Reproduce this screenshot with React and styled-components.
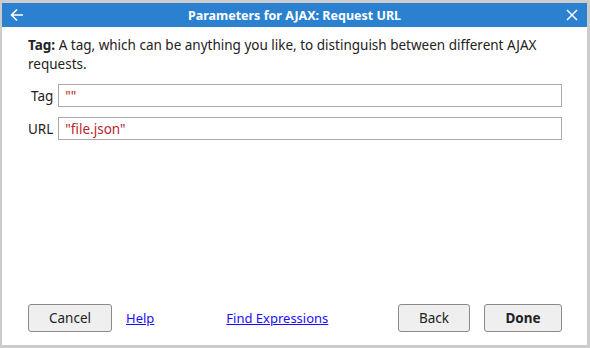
import React from 'react'
import styled, { createGlobalStyle } from 'styled-components'

const Global = createGlobalStyle`
html, body {
    margin:0;
    padding:0;
    background:#fff;
}
`

export default function App() {
    return (
        <Frame>
            <Global />
            <TitleBar>
                <IconBtn aria-label="back">
                    <svg width="16" height="16" viewBox="0 0 16 16" fill="none" stroke="#fff" strokeWidth="1.6">
                        <path d="M14 8H2.5M8 2.5L2.5 8L8 13.5" />
                    </svg>
                </IconBtn>
                <Title>Parameters for AJAX: Request URL</Title>
                <IconBtn aria-label="close">
                    <svg width="14" height="14" viewBox="0 0 14 14" fill="none" stroke="#fff" strokeWidth="1.5">
                        <path d="M2 2L12 12M12 2L2 12" />
                    </svg>
                </IconBtn>
            </TitleBar>
            <Body>
                <Help>
                    <strong>Tag:</strong> A tag, which can be anything you like, to distinguish between different AJAX requests.
                </Help>
                <Fields>
                    <FieldLabel>Tag</FieldLabel>
                    <FieldInput>""</FieldInput>
                    <FieldLabel>URL</FieldLabel>
                    <FieldInput>"file.json"</FieldInput>
                </Fields>
                <Footer>
                    <Button>Cancel</Button>
                    <Link href="#">Help</Link>
                    <Link href="#" $wide>Find Expressions</Link>
                    <Spacer />
                    <Button $w={72}>Back</Button>
                    <Button $w={78} $bold>Done</Button>
                </Footer>
            </Body>
        </Frame>
    )
}

const Frame = styled.div`
box-sizing:border-box;
width:590px;
height:348px;
border:solid #cccccc;
border-width:3px 3px 3px 2px;
display:flex;
flex-direction:column;
font-family:"Noto Sans", "Open Sans", sans-serif;
color:#222;
`

const TitleBar = styled.div`
height:24px;
background:#2b80d0;
display:flex;
align-items:center;
justify-content:space-between;
padding:0 6px 0 6px;
`

const IconBtn = styled.div`
width:18px;
height:18px;
display:flex;
align-items:center;
justify-content:center;
`

const Title = styled.div`
color:#fff;
font-weight:bold;
font-size:12.5px;
`

const Body = styled.div`
flex:1;
display:flex;
flex-direction:column;
padding:9px 25px 13px 26px;
`

const Help = styled.div`
font-size:13.5px;
line-height:19px;
strong{
    font-weight:bold;
}
`

const Fields = styled.div`
display:grid;
grid-template-columns:auto 1fr;
column-gap:5px;
row-gap:10px;
margin-top:10px;
align-items:center;
`

const FieldLabel = styled.div`
font-size:13.5px;
text-align:right;
`

const FieldInput = styled.div`
box-sizing:border-box;
height:23px;
border:1px solid #a9a9a9;
color:#b8242c;
font-size:13.5px;
padding:0 6px;
display:flex;
align-items:center;
`

const Footer = styled.div`
margin-top:auto;
display:flex;
align-items:center;
gap:14px;
`

const Spacer = styled.div`
flex:1;
`

const Button = styled.button`
box-sizing:border-box;
width:${p => p.$w || 84}px;
height:28px;
background:#efefef;
border:1px solid #8a8a8a;
border-radius:3px;
font-family:inherit;
font-size:13.5px;
font-weight:${p => p.$bold ? 'bold' : 'normal'};
color:#222;
`

const Link = styled.a`
color:#1a0dff;
font-size:13px;
text-decoration:underline;
margin-left:${p => p.$wide ? '58px' : '0'};
`
